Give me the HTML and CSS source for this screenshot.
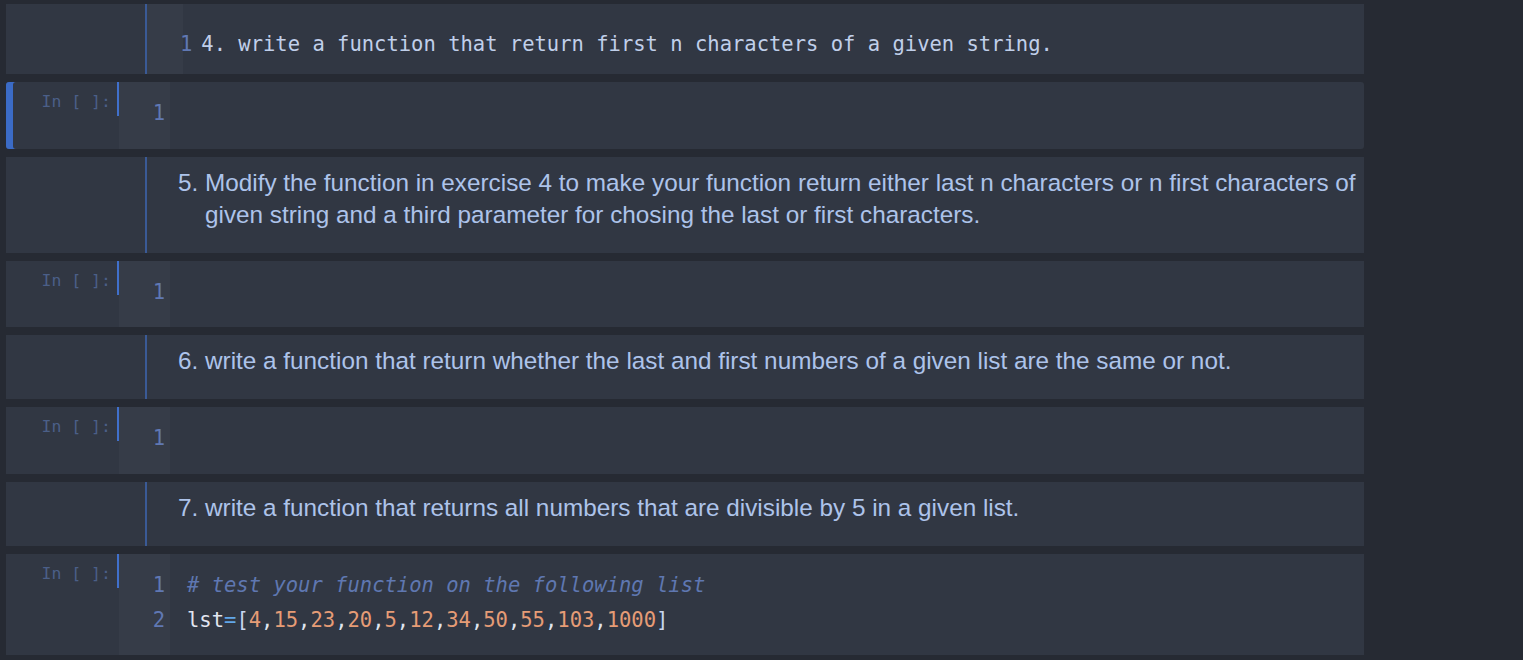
FILE: index.html
```html
<!DOCTYPE html>
<html>
<head>
<meta charset="utf-8">
<link rel="stylesheet" href="styles.css">
</head>
<body>
<div class="notebook">
  <div class="cell md edit">
    <div class="prompt md-prompt"></div>
    <div class="bar full dim"></div>
    <div class="gutter narrow"></div>
    <span class="lnum solo">1</span>
    <div class="md-src">4. write a function that return first n characters of a given string.</div>
  </div>

  <div class="cell code selected">
    <div class="prompt">In [ ]:</div>
    <div class="bar short"></div>
    <div class="gutter"><div class="lnum">1</div></div>
    <div class="src"><div class="line"></div></div>
  </div>

  <div class="cell md">
    <div class="prompt md-prompt"></div>
    <div class="bar full dim"></div>
    <div class="md-body">
      <div class="item"><span class="marker">5.</span><span class="text">Modify the function in exercise 4 to make your function return either last n characters or n first characters of given string and a third parameter for chosing the last or first characters.</span></div>
    </div>
  </div>

  <div class="cell code">
    <div class="prompt">In [ ]:</div>
    <div class="bar short"></div>
    <div class="gutter"><div class="lnum">1</div></div>
    <div class="src"><div class="line"></div></div>
  </div>

  <div class="cell md">
    <div class="prompt md-prompt"></div>
    <div class="bar full dim"></div>
    <div class="md-body">
      <div class="item"><span class="marker">6.</span><span class="text">write a function that return whether the last and first numbers of a given list are the same or not.</span></div>
    </div>
  </div>

  <div class="cell code">
    <div class="prompt">In [ ]:</div>
    <div class="bar short"></div>
    <div class="gutter"><div class="lnum">1</div></div>
    <div class="src"><div class="line"></div></div>
  </div>

  <div class="cell md">
    <div class="prompt md-prompt"></div>
    <div class="bar full dim"></div>
    <div class="md-body">
      <div class="item"><span class="marker">7.</span><span class="text">write a function that returns all numbers that are divisible by 5 in a given list.</span></div>
    </div>
  </div>

  <div class="cell code">
    <div class="prompt">In [ ]:</div>
    <div class="bar short"></div>
    <div class="gutter"><div class="lnum">1</div><div class="lnum">2</div></div>
    <div class="src">
      <div class="line"><span class="cm"># test your function on the following list</span></div>
      <div class="line"><span class="nm">lst</span><span class="op">=</span><span class="br">[</span><span class="num">4</span>,<span class="num">15</span>,<span class="num">23</span>,<span class="num">20</span>,<span class="num">5</span>,<span class="num">12</span>,<span class="num">34</span>,<span class="num">50</span>,<span class="num">55</span>,<span class="num">103</span>,<span class="num">1000</span><span class="br">]</span></div>
    </div>
  </div>
</div>
</body>
</html>
```

FILE: styles.css
```css
html, body {
  margin: 0;
  padding: 0;
  background: #262a33;
}
body {
  padding: 4px 0 0 6px;
  height: 660px;
  box-sizing: border-box;
  overflow: hidden;
}
.notebook {
  width: 1358px;
  display: flex;
  flex-direction: column;
  gap: 8px;
}
.cell {
  display: flex;
  align-items: stretch;
  background: #313743;
}
.cell.selected {
  border-radius: 3px;
  box-shadow: inset 7px 0 0 #3b6bc6;
}
.prompt {
  width: 105px;
  padding: 10px 6px 0 0;
  text-align: right;
  font-family: "DejaVu Sans Mono", monospace;
  font-size: 16.5px;
  line-height: 20px;
  color: #4b5f88;
  flex: none;
  white-space: pre;
}
.md-prompt {
  width: 139px;
  padding: 0;
}
.bar {
  width: 2px;
  flex: none;
  background: #4070cc;
}
.bar.short {
  height: 34px;
  align-self: flex-start;
}
.bar.dim {
  background: #3a5a96;
}
.gutter {
  width: 51px;
  flex: none;
  background: #363c48;
  padding: 14px 0 17.6px;
  box-sizing: border-box;
}
.gutter.narrow {
  width: 36px;
  padding: 0;
}
.lnum {
  font-family: "DejaVu Sans Mono", monospace;
  font-size: 20.5px;
  line-height: 35px;
  height: 35px;
  color: #6078b3;
  text-align: right;
  padding-right: 5px;
}
.lnum.solo {
  padding: 23px 0 0;
  margin-left: -3px;
  width: 12.3px;
  flex: none;
}
.md-src {
  font-family: "DejaVu Sans Mono", monospace;
  font-size: 20.5px;
  line-height: 35px;
  color: #c0cfea;
  padding: 23px 0 12px 9px;
  white-space: pre;
}
.src {
  padding: 14px 0 17.6px 17px;
  font-family: "DejaVu Sans Mono", monospace;
  font-size: 20.5px;
  color: #dfe4ef;
}
.line {
  height: 35px;
  line-height: 35px;
  white-space: pre;
}
.cm { color: #5f77b1; font-style: italic; }
.nm { color: #e2e6f0; }
.op { color: #62a6e8; }
.br { color: #c8d6f0; }
.num { color: #e69c76; }
.md-body {
  flex: 1;
  padding: 10px 8px 22px 31px;
  font-family: "Liberation Sans", Arial, sans-serif;
  font-size: 24.3px;
  line-height: 32px;
  color: #adc3ea;
}
.item {
  display: flex;
}
.marker {
  width: 27px;
  flex: none;
}
.text {
  flex: 1;
}
```
